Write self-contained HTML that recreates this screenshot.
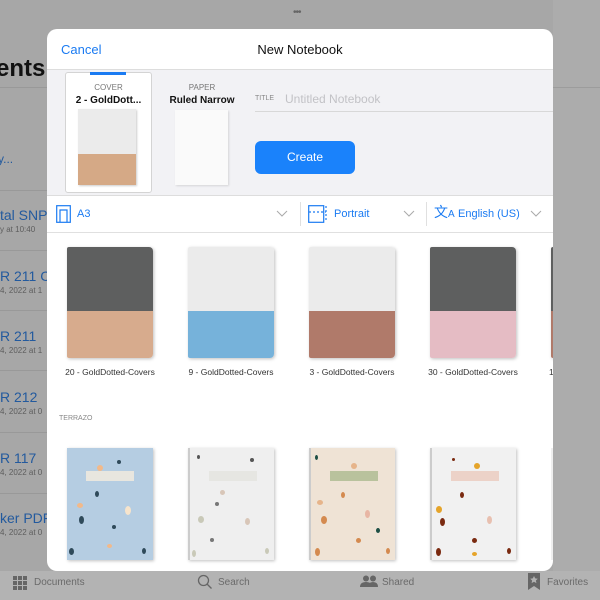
<!DOCTYPE html><html><head><style>
*{margin:0;padding:0;box-sizing:border-box}
body{width:600px;height:600px;overflow:hidden;background:#a7a7a7;font-family:"Liberation Sans",sans-serif;position:relative}
.a{position:absolute}
.bt{color:#235a9e;font-size:14px;white-space:nowrap}
.bs{color:#5e5e5e;font-size:8px;white-space:nowrap}
.ln{height:1px;background:#999;left:0;width:47px}
.modal{left:47px;top:29px;width:506px;height:542px;background:#fff;border-radius:10px;overflow:hidden}
.cv{width:86px;height:111px;border-radius:2px 4px 4px 2px;box-shadow:1px 1px 3px rgba(0,0,0,.25);overflow:hidden}
.cv .t{height:64px}.cv .b{height:47px}
.lab{font-size:8.5px;color:#333;width:120px;text-align:center}
.tz{width:86px;height:112px;box-shadow:1px 1px 3px rgba(0,0,0,.25);overflow:hidden}
.tz i{position:absolute;border-radius:50%;display:block}
.tz .bar{position:absolute;left:19px;top:23px;width:48px;height:10px}
</style></head><body>
<div class="a" style="left:293px;top:7px;font-size:10px;color:#666;letter-spacing:-1px">•••</div>
<div class="a" style="left:-4px;top:55px;font-size:24px;font-weight:bold;color:#111">ents</div>
<div class="a ln" style="top:87px"></div>
<div class="a bt" style="left:-2px;top:152px;font-size:12px">y...</div>
<div class="a ln" style="top:190px"></div>
<div class="a bt" style="left:0;top:207px">tal SNP</div><div class="a bs" style="left:0;top:225px">y at 10:40</div>
<div class="a ln" style="top:250px"></div>
<div class="a bt" style="left:0;top:268px">R 211 Cli</div><div class="a bs" style="left:0;top:286px">4, 2022 at 1</div>
<div class="a ln" style="top:310px"></div>
<div class="a bt" style="left:0;top:328px">R 211</div><div class="a bs" style="left:0;top:346px">4, 2022 at 1</div>
<div class="a ln" style="top:370px"></div>
<div class="a bt" style="left:0;top:389px">R 212</div><div class="a bs" style="left:0;top:407px">4, 2022 at 0</div>
<div class="a ln" style="top:432px"></div>
<div class="a bt" style="left:0;top:450px">R 117</div><div class="a bs" style="left:0;top:468px">4, 2022 at 0</div>
<div class="a ln" style="top:493px"></div>
<div class="a bt" style="left:0;top:510px">ker PDFs</div><div class="a bs" style="left:0;top:528px">4, 2022 at 0</div>
<div class="a" style="left:553px;top:0;width:47px;height:571px;background:#acacac"></div>
<div class="a" style="left:553px;top:87px;width:47px;height:1px;background:#9c9c9c"></div>
<div class="a" style="left:0;top:571px;width:600px;height:29px;background:#b3b3b3"></div>
<div class="a" style="left:13px;top:576px;display:grid;grid-template-columns:repeat(3,4px);gap:1px"><b style="width:4px;height:4px;background:#666"></b><b style="width:4px;height:4px;background:#666"></b><b style="width:4px;height:4px;background:#666"></b><b style="width:4px;height:4px;background:#666"></b><b style="width:4px;height:4px;background:#666"></b><b style="width:4px;height:4px;background:#666"></b><b style="width:4px;height:4px;background:#666"></b><b style="width:4px;height:4px;background:#666"></b><b style="width:4px;height:4px;background:#666"></b></div>
<div class="a" style="left:34px;top:577px;font-size:10px;color:#6a6a6a">Documents</div>
<svg class="a" style="left:197px;top:574px" width="16" height="16"><circle cx="6.5" cy="6.5" r="5" fill="none" stroke="#666" stroke-width="1.3"/><path d="M10 10l4.5 4.5" stroke="#666" stroke-width="1.3"/></svg>
<div class="a" style="left:218px;top:577px;font-size:10px;color:#6a6a6a">Search</div>
<svg class="a" style="left:360px;top:575px" width="18" height="12"><circle cx="6" cy="3.5" r="3" fill="#666"/><circle cx="13" cy="3.5" r="3" fill="#666"/><path d="M0 12q0-5 6-5t6 5zM8 12q0-5 5-5t5 5z" fill="#666"/></svg>
<div class="a" style="left:382px;top:577px;font-size:10px;color:#6a6a6a">Shared</div>
<svg class="a" style="left:528px;top:573px" width="12" height="17"><path d="M0 0h12v17l-6-4-6 4z" fill="#666"/><path d="M6 3l1.2 2.4 2.6.3-1.9 1.8.5 2.6L6 8.8 3.6 10.1l.5-2.6L2.2 5.7l2.6-.3z" fill="#b3b3b3"/></svg>
<div class="a" style="left:547px;top:577px;font-size:10px;color:#6a6a6a">Favorites</div>

<div class="a modal">
<div class="a" style="left:14px;top:13px;font-size:13px;color:#1b7bf2">Cancel</div>
<div class="a" style="left:0;width:506px;top:13px;text-align:center;font-size:13px;color:#111">New Notebook</div>
<div class="a" style="left:0;top:40px;width:506px;height:127px;background:#f2f2f5;border-top:1px solid #ddd;border-bottom:1px solid #ddd"></div>
<div class="a" style="left:18px;top:43px;width:87px;height:121px;background:#fff;border:1px solid #d4d4d4;border-radius:3px"></div>
<div class="a" style="left:43px;top:43px;width:36px;height:3px;background:#1b7bf2"></div>
<div class="a" style="left:18px;top:54px;width:87px;text-align:center;font-size:8px;color:#777">COVER</div>
<div class="a" style="left:18px;top:66px;width:87px;text-align:center;font-size:10px;font-weight:bold;color:#111">2 - GoldDott...</div>
<div class="a" style="left:31px;top:80px;width:58px;height:76px;box-shadow:1px 1px 2px rgba(0,0,0,.2);overflow:hidden"><div style="height:45px;background:#ebebeb"></div><div style="height:31px;background:#d5a986"></div></div>
<div class="a" style="left:112px;top:54px;width:86px;text-align:center;font-size:8px;color:#777">PAPER</div>
<div class="a" style="left:112px;top:66px;width:86px;text-align:center;font-size:10px;font-weight:bold;color:#111">Ruled Narrow</div>
<div class="a" style="left:128px;top:81px;width:53px;height:75px;background:#fafafa;box-shadow:1px 1px 2px rgba(0,0,0,.12)"></div>
<div class="a" style="left:208px;top:66px;font-size:7px;color:#888">TITLE</div>
<div class="a" style="left:238px;top:63px;font-size:12px;color:#c2c2c6">Untitled Notebook</div>
<div class="a" style="left:208px;top:82px;width:298px;height:1px;background:#d8d8d8"></div>
<div class="a" style="left:208px;top:112px;width:100px;height:33px;background:#1a82fb;border-radius:6px;color:#fff;font-size:12px;text-align:center;line-height:33px">Create</div>
<div class="a" style="left:0;top:203px;width:506px;height:1px;background:#e0e0e0"></div>
<svg class="a" style="left:9px;top:176px" width="15" height="18"><rect x=".7" y=".7" width="13.6" height="16.6" fill="none" stroke="#1b7bf2" stroke-width="1.2"/><path d="M4 17V5h7v12" fill="none" stroke="#1b7bf2" stroke-width="1.2"/></svg>
<div class="a" style="left:30px;top:179px;font-size:11px;color:#1b7bf2">A3</div>
<svg class="a" style="left:229px;top:181px" width="12" height="7"><path d="M1 1l5 5 5-5" fill="none" stroke="#aaa"/></svg>
<div class="a" style="left:253px;top:173px;width:1px;height:24px;background:#e0e0e0"></div>
<svg class="a" style="left:261px;top:176px" width="19" height="18"><rect x=".7" y=".7" width="15" height="16.6" fill="none" stroke="#1b7bf2" stroke-width="1.2"/><path d="M1 7h17M18 1v16" fill="none" stroke="#1b7bf2" stroke-width="1.2" stroke-dasharray="2 2"/></svg>
<div class="a" style="left:287px;top:179px;font-size:11px;color:#1b7bf2">Portrait</div>
<svg class="a" style="left:356px;top:181px" width="12" height="7"><path d="M1 1l5 5 5-5" fill="none" stroke="#aaa"/></svg>
<div class="a" style="left:379px;top:173px;width:1px;height:24px;background:#e0e0e0"></div>
<div class="a" style="left:387px;top:175px;font-size:14px;color:#1b7bf2;font-family:'Noto Sans CJK SC',sans-serif;line-height:16px">文<span style="font-size:10px;font-family:'Liberation Sans'">A</span></div>
<div class="a" style="left:411px;top:179px;font-size:11px;color:#1b7bf2">English (US)</div>
<svg class="a" style="left:483px;top:181px" width="12" height="7"><path d="M1 1l5 5 5-5" fill="none" stroke="#aaa"/></svg>
<div class="a cv" style="left:20px;top:218px"><div class="t" style="background:#5e5f5f"></div><div class="b" style="background:#d7ab8d"></div></div>
<div class="a cv" style="left:141px;top:218px"><div class="t" style="background:#ebebeb"></div><div class="b" style="background:#76b2da"></div></div>
<div class="a cv" style="left:262px;top:218px"><div class="t" style="background:#ebebeb"></div><div class="b" style="background:#b07a6a"></div></div>
<div class="a cv" style="left:383px;top:218px"><div class="t" style="background:#5e5f5f"></div><div class="b" style="background:#e5bcc4"></div></div>
<div class="a cv" style="left:504px;top:218px"><div class="t" style="background:#5e5f5f"></div><div class="b" style="background:#b07a6a"></div></div>
<div class="a lab" style="left:3px;top:338px">20 - GoldDotted-Covers</div>
<div class="a lab" style="left:124px;top:338px">9 - GoldDotted-Covers</div>
<div class="a lab" style="left:245px;top:338px">3 - GoldDotted-Covers</div>
<div class="a lab" style="left:366px;top:338px">30 - GoldDotted-Covers</div>
<div class="a lab" style="left:487px;top:338px;text-align:left;padding-left:15px">19 - GoldDotted</div>
<div class="a" style="left:12px;top:386px;font-size:7px;color:#888">TERRAZO</div>
<div class="a tz" style="left:20px;top:419px;background:#b5cde2"><div class="bar" style="background:#e8e6df"></div><i style="left:30px;top:17px;width:6px;height:6px;background:#f2b98a"></i><i style="left:50px;top:12px;width:4px;height:4px;background:#2f4a5a"></i><i style="left:28px;top:43px;width:4px;height:6px;background:#2f4a5a"></i><i style="left:10px;top:55px;width:6px;height:5px;background:#f2b98a"></i><i style="left:58px;top:58px;width:6px;height:9px;background:#f6e4cc"></i><i style="left:12px;top:68px;width:5px;height:8px;background:#2f4a5a"></i><i style="left:45px;top:77px;width:4px;height:4px;background:#2f4a5a"></i><i style="left:2px;top:100px;width:5px;height:7px;background:#2f4a5a"></i><i style="left:40px;top:96px;width:5px;height:4px;background:#f2b98a"></i><i style="left:75px;top:100px;width:4px;height:6px;background:#2f4a5a"></i></div>
<div class="a tz" style="left:141px;top:419px;background:#efefef;border-left:2px solid #ccc"><div class="bar" style="background:#e6e6e2"></div><i style="left:7px;top:7px;width:3px;height:4px;background:#555"></i><i style="left:60px;top:10px;width:4px;height:4px;background:#555"></i><i style="left:30px;top:42px;width:5px;height:5px;background:#d8c6b8"></i><i style="left:25px;top:54px;width:4px;height:4px;background:#777"></i><i style="left:8px;top:68px;width:6px;height:7px;background:#c9c9b8"></i><i style="left:55px;top:70px;width:5px;height:7px;background:#d8c6b8"></i><i style="left:20px;top:90px;width:4px;height:4px;background:#777"></i><i style="left:2px;top:102px;width:4px;height:7px;background:#c9c9b8"></i><i style="left:75px;top:100px;width:4px;height:6px;background:#c9c9b8"></i></div>
<div class="a tz" style="left:262px;top:419px;background:#efe3d5;border-left:2px solid #ccc"><div class="bar" style="background:#b9c29d"></div><i style="left:4px;top:7px;width:3px;height:5px;background:#1e4f45"></i><i style="left:40px;top:15px;width:6px;height:6px;background:#e6b48a"></i><i style="left:30px;top:44px;width:4px;height:6px;background:#d48a4f"></i><i style="left:6px;top:52px;width:6px;height:5px;background:#e6b48a"></i><i style="left:10px;top:68px;width:6px;height:8px;background:#d48a4f"></i><i style="left:54px;top:62px;width:5px;height:8px;background:#e8b6a4"></i><i style="left:65px;top:80px;width:4px;height:5px;background:#1e4f45"></i><i style="left:45px;top:90px;width:5px;height:5px;background:#d48a4f"></i><i style="left:4px;top:100px;width:5px;height:8px;background:#d48a4f"></i><i style="left:75px;top:100px;width:4px;height:6px;background:#d48a4f"></i></div>
<div class="a tz" style="left:383px;top:419px;background:#f1f1f1;border-left:2px solid #ccc"><div class="bar" style="background:#ecd2c8"></div><i style="left:42px;top:15px;width:6px;height:6px;background:#e5a42a"></i><i style="left:20px;top:10px;width:3px;height:3px;background:#7a2a10"></i><i style="left:28px;top:44px;width:4px;height:6px;background:#7a2a10"></i><i style="left:4px;top:58px;width:6px;height:7px;background:#e5a42a"></i><i style="left:8px;top:70px;width:5px;height:8px;background:#7a2a10"></i><i style="left:55px;top:68px;width:5px;height:8px;background:#e8c0b0"></i><i style="left:40px;top:90px;width:5px;height:5px;background:#7a2a10"></i><i style="left:4px;top:100px;width:5px;height:8px;background:#7a2a10"></i><i style="left:40px;top:104px;width:5px;height:4px;background:#e5a42a"></i><i style="left:75px;top:100px;width:4px;height:6px;background:#7a2a10"></i></div>
<div class="a" style="left:504px;top:419px;width:6px;height:112px;background:#eee"></div>
</div>
</body></html>
